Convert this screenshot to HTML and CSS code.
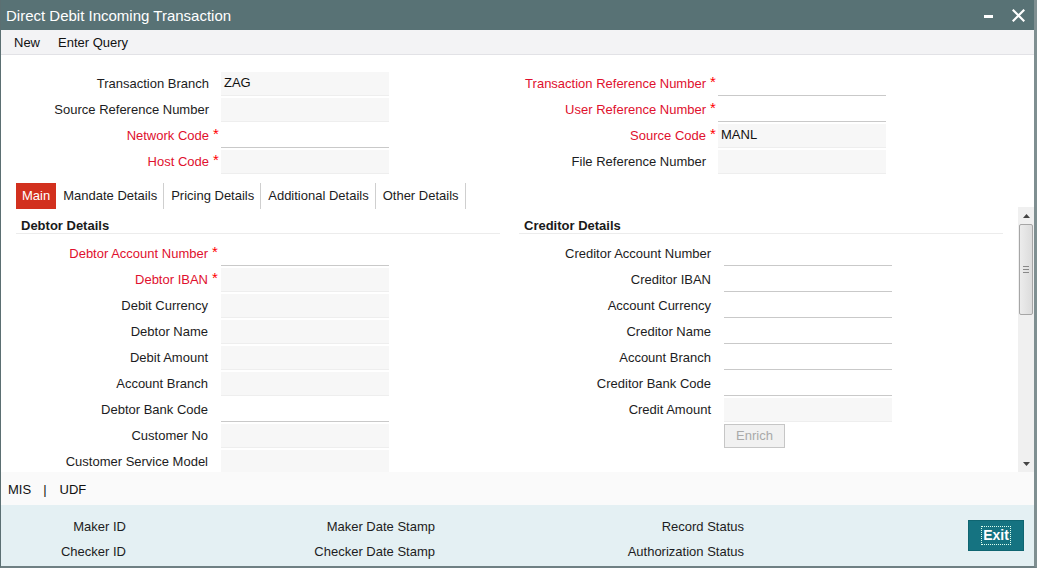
FILE: index.html
```html
<!DOCTYPE html>
<html>
<head>
<meta charset="utf-8">
<link rel="stylesheet" href="styles.css">
</head>
<body>
<div class="window">
  <div class="titlebar">
    <span class="title">Direct Debit Incoming Transaction</span>
    <div class="controls">
      <svg class="ico-min" width="11" height="11" viewBox="0 0 11 11"><rect x="1" y="5" width="9" height="3" fill="#fff"/></svg>
      <svg class="ico-close" width="13" height="13" viewBox="0 0 13 13"><path d="M1.5 1.5 L11.5 11.5 M11.5 1.5 L1.5 11.5" stroke="#fff" stroke-width="2.2" stroke-linecap="square"/></svg>
    </div>
  </div>
  <div class="menubar">
    <span>New</span>
    <span>Enter Query</span>
  </div>
  <div class="header">
    <div class="fgroup">
      <div class="row"><span class="lbl">Transaction Branch</span><span class="star"></span><div class="inp ro">ZAG</div></div>
      <div class="row"><span class="lbl">Source Reference Number</span><span class="star"></span><div class="inp ro"></div></div>
      <div class="row"><span class="lbl req">Network Code</span><span class="star">*</span><div class="inp ed"></div></div>
      <div class="row"><span class="lbl req">Host Code</span><span class="star">*</span><div class="inp ro"></div></div>
    </div>
    <div class="fgroup">
      <div class="row"><span class="lbl req">Transaction Reference Number</span><span class="star">*</span><div class="inp ed"></div></div>
      <div class="row"><span class="lbl req">User Reference Number</span><span class="star">*</span><div class="inp ed"></div></div>
      <div class="row"><span class="lbl req">Source Code</span><span class="star">*</span><div class="inp ro">MANL</div></div>
      <div class="row"><span class="lbl">File Reference Number</span><span class="star"></span><div class="inp ro"></div></div>
    </div>
  </div>
  <div class="tabs">
    <span class="tab active">Main</span>
    <span class="tab">Mandate Details</span>
    <span class="tab">Pricing Details</span>
    <span class="tab">Additional Details</span>
    <span class="tab">Other Details</span>
  </div>
  <div class="body">
    <div class="scroll">
      <section class="sect">
        <h3>Debtor Details</h3>
        <div class="rows">
          <div class="row"><span class="lbl req">Debtor Account Number</span><span class="star">*</span><div class="inp ed"></div></div>
          <div class="row"><span class="lbl req">Debtor IBAN</span><span class="star">*</span><div class="inp ro"></div></div>
          <div class="row"><span class="lbl">Debit Currency</span><span class="star"></span><div class="inp ro"></div></div>
          <div class="row"><span class="lbl">Debtor Name</span><span class="star"></span><div class="inp ro"></div></div>
          <div class="row"><span class="lbl">Debit Amount</span><span class="star"></span><div class="inp ro"></div></div>
          <div class="row"><span class="lbl">Account Branch</span><span class="star"></span><div class="inp ro"></div></div>
          <div class="row"><span class="lbl">Debtor Bank Code</span><span class="star"></span><div class="inp ed"></div></div>
          <div class="row"><span class="lbl">Customer No</span><span class="star"></span><div class="inp ro"></div></div>
          <div class="row"><span class="lbl">Customer Service Model</span><span class="star"></span><div class="inp ro"></div></div>
        </div>
      </section>
      <section class="sect">
        <h3>Creditor Details</h3>
        <div class="rows">
          <div class="row"><span class="lbl">Creditor Account Number</span><span class="star"></span><div class="inp ed"></div></div>
          <div class="row"><span class="lbl">Creditor IBAN</span><span class="star"></span><div class="inp ed"></div></div>
          <div class="row"><span class="lbl">Account Currency</span><span class="star"></span><div class="inp ed"></div></div>
          <div class="row"><span class="lbl">Creditor Name</span><span class="star"></span><div class="inp ed"></div></div>
          <div class="row"><span class="lbl">Account Branch</span><span class="star"></span><div class="inp ed"></div></div>
          <div class="row"><span class="lbl">Creditor Bank Code</span><span class="star"></span><div class="inp ed"></div></div>
          <div class="row"><span class="lbl">Credit Amount</span><span class="star"></span><div class="inp ro"></div></div>
          <div class="row"><span class="lbl"></span><span class="star"></span><div class="btncell"><span class="btn-enrich">Enrich</span></div></div>
        </div>
      </section>
    </div>
    <div class="scrollbar">
      <div class="sb-arrow"><svg width="7" height="4" viewBox="0 0 7 4"><path d="M0 4 L3.5 0 L7 4 Z" fill="#444"/></svg></div>
      <div class="sb-thumb"><span class="grip"></span></div>
      <div class="sb-track"></div>
      <div class="sb-arrow"><svg width="7" height="4" viewBox="0 0 7 4"><path d="M0 0 L7 0 L3.5 4 Z" fill="#444"/></svg></div>
    </div>
  </div>
  <div class="links">
    <span>MIS</span><span class="sep">|</span><span>UDF</span>
  </div>
  <div class="footer">
    <div class="fgrid">
      <div class="fcell"><span>Maker ID</span></div>
      <div class="fcell"><span>Maker Date Stamp</span></div>
      <div class="fcell"><span>Record Status</span></div>
      <div class="fcell"><span>Checker ID</span></div>
      <div class="fcell"><span>Checker Date Stamp</span></div>
      <div class="fcell"><span>Authorization Status</span></div>
    </div>
    <button class="btn-exit"><span>Exit</span></button>
  </div>
</div>
</body>
</html>
```

FILE: styles.css
```css
* { box-sizing: border-box; }
html, body { margin: 0; padding: 0; }
body {
  font-family: "Liberation Sans", Arial, sans-serif;
  font-size: 13px;
  color: #1c1c22;
  background: #fff;
}
.window {
  width: 1037px;
  height: 568px;
  display: flex;
  flex-direction: column;
  border-left: 1px solid #5b6f72;
  border-right: 3px solid #7f8f91;
  border-bottom: 2px solid #6f8083;
  overflow: hidden;
  background: #fff;
}
.titlebar {
  height: 30px;
  flex: none;
  background: #587275;
  color: #fff;
  display: flex;
  align-items: center;
  padding-left: 6px;
  margin-left: -1px;
  margin-right: -3px;
}
.title { font-size: 15px; }
.controls {
  margin-left: auto;
  display: flex;
  align-items: center;
  gap: 18px;
  margin-right: 12px;
}
.ico-min { margin-top: 1px; }
.menubar {
  height: 25px;
  flex: none;
  background: #f3f3f5;
  border-bottom: 1px solid #e2e2e6;
  display: flex;
  align-items: center;
  padding-left: 13px;
  gap: 18px;
  color: #111;
}
.header {
  flex: none;
  height: 118px;
  padding-top: 17px;
  display: flex;
  gap: 108px;
}
.fgroup, .rows {
  display: flex;
  flex-direction: column;
  gap: 2px;
}
.fgroup { width: 389px; }
.row {
  display: grid;
  grid-template-columns: 208px 12px 168px;
  height: 24px;
  line-height: 24px;
}
.rows .row { grid-template-columns: 192px 13px 168px; }
.lbl {
  text-align: right;
  white-space: nowrap;
  color: #1c1c22;
}
.lbl.req { color: #e0102e; }
.star {
  color: #ff0000;
  font-size: 15px;
  line-height: 20px;
  padding-left: 4px;
}
.inp {
  height: 24px;
  padding-left: 3px;
  line-height: 22px;
  color: #111;
}
.inp.ro {
  background: #f7f7f7;
  border-bottom: 1px solid #eeeeee;
}
.inp.ed {
  background: #fff;
  border-bottom: 1px solid #c9c9c9;
}
.tabs {
  flex: none;
  height: 26px;
  margin-top: 10px;
  margin-left: 15px;
  display: flex;
  align-items: stretch;
}
.tab {
  padding: 0 6px 0 7px;
  line-height: 26px;
  border-right: 1px solid #cfcfcf;
  color: #1c1c22;
  white-space: nowrap;
}
.tab.active {
  background: #d2301e;
  color: #fff;
  border-right: none;
  padding: 0 6px;
}
.body {
  flex: none;
  height: 263px;
  display: flex;
}
.scroll {
  flex: 1;
  padding-left: 15px;
  padding-top: 10px;
  display: flex;
  gap: 19px;
  overflow: hidden;
}
.sect { width: 484px; }
.sect h3 {
  margin: 0 0 8px 0;
  padding-left: 5px;
  font-size: 13px;
  line-height: 14px;
  height: 15px;
  font-weight: bold;
  color: #1a1a1a;
  border-bottom: 1px solid #ececec;
}
.btncell { display: flex; align-items: center; }
.btn-enrich {
  display: inline-block;
  width: 61px;
  height: 24px;
  line-height: 22px;
  text-align: center;
  border: 1px solid #c6c6c6;
  background: #f1f1f1;
  color: #a9a9a9;
}
.scrollbar {
  width: 16px;
  flex: none;
  display: flex;
  flex-direction: column;
  background: #f0f0f0;
  margin-top: -2px;
}
.sb-arrow {
  height: 17px;
  display: flex;
  align-items: center;
  justify-content: center;
}
.sb-thumb {
  height: 91px;
  margin: 0 1px;
  border: 1px solid #a6a6a6;
  border-radius: 2px;
  background: linear-gradient(to right, #ececec, #dcdcdc);
  display: flex;
  align-items: center;
  justify-content: center;
}
.grip {
  width: 6px;
  height: 7px;
  border-top: 1px solid #888;
  border-bottom: 1px solid #888;
  background: linear-gradient(#888, #888) center / 6px 1px no-repeat;
}
.sb-track { flex: 1; }
.links {
  flex: none;
  height: 33px;
  background: #fafafa;
  display: flex;
  align-items: center;
  padding-left: 7px;
  padding-top: 2px;
  color: #111;
}
.sep { margin: 0 13px 0 12px; }
.footer {
  flex: none;
  height: 61px;
  background: #e4f0f3;
  display: flex;
  align-items: center;
}
.fgrid {
  display: grid;
  grid-template-columns: repeat(3, 309px);
  grid-auto-rows: 25px;
  align-self: flex-start;
  padding-top: 9px;
}
.fcell { line-height: 25px; }
.fcell span {
  display: inline-block;
  width: 125px;
  text-align: right;
  color: #1c1c22;
}
.btn-exit {
  margin-left: auto;
  margin-right: 10px;
  width: 56px;
  height: 31px;
  background: #157381;
  border: 1px solid #0f6571;
  color: #fff;
  font-family: "Liberation Sans", Arial, sans-serif;
  font-weight: bold;
  font-size: 14px;
  padding: 0;
  display: flex;
  align-items: center;
  justify-content: center;
}
.btn-exit span {
  outline: 1px dotted #dfe;
  padding: 0 1px;
  line-height: 17px;
}
```
